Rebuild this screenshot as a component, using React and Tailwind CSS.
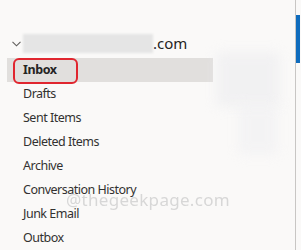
import React from 'react';

const folders = ['Drafts', 'Sent Items', 'Deleted Items', 'Archive', 'Conversation History', 'Junk Email', 'Outbox'];

const App = () => {
  return (
    <div
      className="relative w-[301px] h-[250px] overflow-hidden bg-[#faf9f8] flex"
      style={{ fontFamily: '"Noto Sans", "Open Sans", sans-serif' }}
    >
      <div className="w-[296px] h-full border-r border-[#c8c6c4] flex flex-col">
        <div className="h-6 mt-[-15px] pl-[23px] flex items-center text-[12.5px] tracking-[-0.5px] text-[#323130]">Search Folders</div>

        <div className="h-6 mt-[24px] flex items-center">
          <svg className="ml-[12px] w-[9px] h-[6px]" viewBox="0 0 9 6" fill="none">
            <path d="M0.5 0.8 L4.5 4.8 L8.5 0.8" stroke="#605e5c" strokeWidth="1.1" />
          </svg>
          <div className="ml-[2px] w-[130px] h-[19px] bg-[#e5e5e5] blur-[1px]"></div>
          <span className="text-[15px] text-[#252423] leading-none">.com</span>
        </div>

        <div className="mt-[3px] flex flex-col">
          <div className="h-6 ml-[7px] w-[206px] bg-[#e1dfdd] flex items-center pl-[16px] text-[12.5px] tracking-[-0.4px] font-bold text-[#252423]">
            Inbox
          </div>
          {folders.map((f) => (
            <div key={f} className="h-6 flex items-center pl-[23px] text-[12.5px] tracking-[-0.5px] text-[#323130]">
              {f}
            </div>
          ))}
        </div>
      </div>

      <div className="w-[4px] h-full">
        <div className="mt-[15px] h-[48px] bg-[#0f6cbd]"></div>
      </div>

      <div className="absolute left-[216px] top-[52px] w-[64px] h-[55px] bg-[#ececef] blur-[6px] opacity-60"></div>
      <div className="absolute left-[238px] top-[105px] w-[40px] h-[50px] bg-[#f0f0f2] blur-[6px] opacity-60"></div>

      <div className="absolute left-[13px] top-[58px] w-[65px] h-[26px] border-2 border-[#e0262f] rounded-[6px]"></div>

      <div className="absolute left-[66px] top-[187px] text-[17px] text-[#cfcfcf] opacity-80 tracking-[0.3px]">
        @thegeekpage.com
      </div>
    </div>
  );
};

export default App;
